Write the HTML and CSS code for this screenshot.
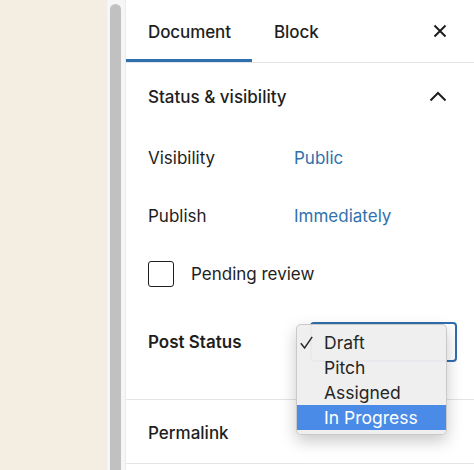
FILE: index.html
```html
<!DOCTYPE html>
<html lang="en">
<head>
<meta charset="utf-8">
<title>Document settings</title>
<link rel="stylesheet" href="styles.css">
</head>
<body>
<div class="app">
  <div class="canvas"></div>
  <div class="scroll-track"><div class="scroll-thumb"></div></div>
  <aside class="sidebar">
    <div class="tabs">
      <div class="tab active">Document</div>
      <div class="tab">Block</div>
      <button class="close" aria-label="Close">
        <svg width="14" height="14" viewBox="0 0 14 14"><path d="M1.5 1.5 L12.5 12.5 M12.5 1.5 L1.5 12.5" stroke="#1e1e1e" stroke-width="2" fill="none"/></svg>
      </button>
    </div>
    <section class="panel">
      <div class="panel-head">
        <span class="panel-title">Status &amp; visibility</span>
        <svg class="chev" width="18" height="11" viewBox="0 0 18 11"><path d="M1.5 9.5 L9 2 L16.5 9.5" stroke="#1e1e1e" stroke-width="2" fill="none"/></svg>
      </div>
      <div class="row first">
        <span class="label">Visibility</span>
        <span class="value">Public</span>
      </div>
      <div class="row">
        <span class="label">Publish</span>
        <span class="value">Immediately</span>
      </div>
      <div class="row">
        <span class="checkbox"></span>
        <span class="check-label">Pending review</span>
      </div>
      <div class="row status-row">
        <span class="label strong">Post Status</span>
        <div class="select-wrap">
          <div class="select"></div>
          <ul class="menu">
            <li><svg class="tick" width="13" height="13" viewBox="0 0 13 13"><path d="M0.8 7.2 L4.6 12 L12.2 0.8" stroke="#262626" stroke-width="1.4" fill="none"/></svg>Draft</li>
            <li>Pitch</li>
            <li>Assigned</li>
            <li class="hl">In Progress</li>
          </ul>
        </div>
      </div>
    </section>
    <section class="panel closed">
      <div class="panel-head short">
        <span class="panel-title">Permalink</span>
      </div>
    </section>
  </aside>
</div>
</body>
</html>
```

FILE: styles.css
```css
* { box-sizing: border-box; }
html, body { margin: 0; padding: 0; }
body {
  width: 474px;
  height: 470px;
  overflow: hidden;
  font-family: Inter, "Open Sans", "Liberation Sans", sans-serif;
  color: #1e1e1e;
  background: #fff;
}
.app {
  display: flex;
  height: 470px;
  overflow: hidden;
}
.canvas {
  width: 106px;
  flex: none;
  background: #f4eee2;
}
.scroll-track {
  width: 20px;
  flex: none;
  display: flex;
  flex-direction: column;
  background: #f6f6f6;
  border-left: 1px solid #ececec;
  border-right: 1px solid #ececec;
  padding: 4px 4px 0 3px;
}
.scroll-thumb {
  flex: 1;
  background: #c1c1c1;
  border-radius: 6px 6px 0 0;
}
.sidebar {
  flex: 1;
  display: flex;
  flex-direction: column;
  background: #fff;
}
.tabs {
  display: flex;
  align-items: stretch;
  height: 63px;
  border-bottom: 1px solid #e4e4e4;
}
.tab {
  display: flex;
  align-items: center;
  padding: 2px 21px 0 22px;
  font-size: 17px;
  font-weight: 500;
  letter-spacing: -0.1px;
}
.tab.active {
  box-shadow: inset 0 -3px 0 #2f6fae;
  width: 126px;
}
.close {
  margin-left: auto;
  margin-right: 27px;
  border: 0;
  background: none;
  padding: 0;
  display: flex;
  align-items: center;
}
.panel {
  border-bottom: 1px solid #e4e4e4;
  padding: 0 17px 0 22px;
}
.panel-head {
  height: 66px;
  display: flex;
  align-items: center;
  justify-content: space-between;
  padding-top: 1px;
}
.panel-title {
  font-size: 17px;
  font-weight: 500;
}
.chev { margin-right: 10px; }
.panel-head.short { height: 63px; padding-top: 2px; }
.panel:not(.closed) { padding-bottom: 37px; }
.row {
  display: flex;
  align-items: center;
  height: 40px;
  margin-top: 18px;
  font-size: 17px;
}
.row.first { margin-top: 9px; }
.label { width: 146px; flex: none; }
.label.strong { font-weight: 600; }
.value { color: #2f72ad; }
.checkbox {
  width: 26px;
  height: 26px;
  border: 1.5px solid #1e1e1e;
  border-radius: 3px;
  margin-right: 17px;
}
.status-row { margin-top: 28px; }
.select-wrap {
  position: relative;
  margin-left: 16px;
  width: 147px;
  height: 40px;
}
.select {
  width: 100%;
  height: 100%;
  border: 2px solid #2f6fae;
  border-radius: 4px;
}
.menu {
  position: absolute;
  left: -14px;
  top: 2px;
  width: 151px;
  margin: 0;
  padding: 5px 0 4px;
  list-style: none;
  background: rgba(238, 238, 238, 0.97);
  border: 0.5px solid rgba(0, 0, 0, 0.16);
  border-radius: 5px;
  box-shadow: 0 6px 16px rgba(0, 0, 0, 0.22);
  font-family: Inter, "Liberation Sans", sans-serif;
  font-size: 17.5px;
  color: #262626;
}
.menu li {
  position: relative;
  height: 25px;
  line-height: 25px;
  padding-left: 27px;
}
.menu .tick {
  position: absolute;
  left: 3px;
  top: 6px;
}
.menu li.hl {
  background: #4a8be8;
  color: #fff;
}
```
